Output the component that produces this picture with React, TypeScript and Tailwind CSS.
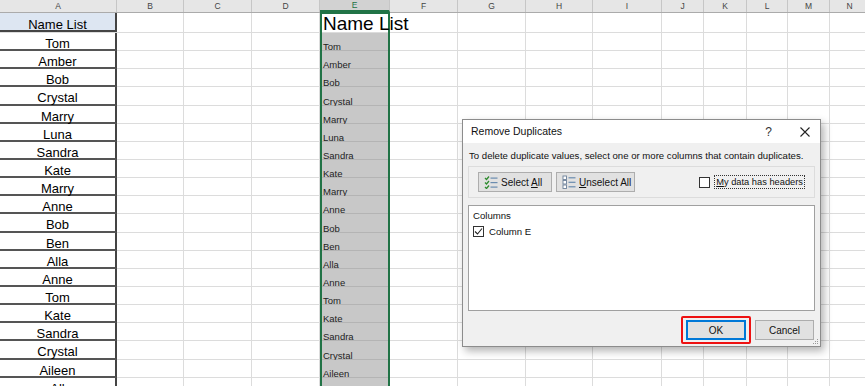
import React from "react";

const cols: { l: string; w: number }[] = [
  { l: "A", w: 117 },
  { l: "B", w: 67 },
  { l: "C", w: 68 },
  { l: "D", w: 68 },
  { l: "E", w: 70 },
  { l: "F", w: 68 },
  { l: "G", w: 68 },
  { l: "H", w: 67 },
  { l: "I", w: 69 },
  { l: "J", w: 42 },
  { l: "K", w: 43 },
  { l: "L", w: 41 },
  { l: "M", w: 42 },
  { l: "N", w: 40 },
];

const names = [
  "Tom", "Amber", "Bob", "Crystal", "Marry", "Luna", "Sandra", "Kate", "Marry", "Anne",
  "Bob", "Ben", "Alla", "Anne", "Tom", "Kate", "Sandra", "Crystal", "Aileen", "All",
];

function SelectAllIcon() {
  return (
    <svg width="14" height="14" viewBox="0 0 14 14">
      <path d="M1 3 L2.5 4.5 L5 1.5" stroke="#2e8b2e" strokeWidth="1.3" fill="none" />
      <path d="M1 7.5 L2.5 9 L5 6" stroke="#2e8b2e" strokeWidth="1.3" fill="none" />
      <path d="M1 12 L2.5 13.5 L5 10.5" stroke="#2e8b2e" strokeWidth="1.3" fill="none" />
      <rect x="6.5" y="2.5" width="7" height="1.2" fill="#6a8caf" />
      <rect x="6.5" y="7" width="7" height="1.2" fill="#6a8caf" />
      <rect x="6.5" y="11.5" width="7" height="1.2" fill="#6a8caf" />
    </svg>
  );
}

function UnselectAllIcon() {
  return (
    <svg width="14" height="14" viewBox="0 0 14 14">
      <rect x="1" y="1" width="3.5" height="3.5" stroke="#6a7f99" fill="#fff" strokeWidth="0.9" />
      <rect x="1" y="5.5" width="3.5" height="3.5" stroke="#6a7f99" fill="#fff" strokeWidth="0.9" />
      <rect x="1" y="10" width="3.5" height="3.5" stroke="#6a7f99" fill="#fff" strokeWidth="0.9" />
      <rect x="6.5" y="2.2" width="7" height="1.2" fill="#6a8caf" />
      <rect x="6.5" y="6.7" width="7" height="1.2" fill="#6a8caf" />
      <rect x="6.5" y="11.2" width="7" height="1.2" fill="#6a8caf" />
    </svg>
  );
}

export default function App() {
  return (
    <div
      className="relative w-[865px] h-[386px] overflow-hidden bg-white"
      style={{ fontFamily: '"Liberation Sans", Arial, sans-serif' }}
    >
      {/* column header row */}
      <div className="flex h-[13px] bg-[#e6e6e6] border-b border-[#ababab]">
        {cols.map((c) => (
          <div
            key={c.l}
            className={
              c.l === "E"
                ? "shrink-0 flex items-center justify-center text-[8.5px] text-[#217346] bg-[#d2d2d2] border-r border-[#c6c6c6] border-b-2 border-b-[#217346]"
                : "shrink-0 flex items-center justify-center text-[8.5px] text-[#444] border-r border-[#c6c6c6]"
            }
            style={{ width: c.w }}
          >
            {c.l}
          </div>
        ))}
      </div>

      {/* row 1 */}
      <div className="flex h-[20px] border-b border-[#dcdcdc]">
        <div
          className="shrink-0 flex items-center justify-center pt-[6px] text-[13px] leading-[10px] text-black bg-[#dde6f2] border-r-2 border-r-[#444] border-b-2 border-b-[#444]"
          style={{ width: cols[0].w }}
        >
          Name List
        </div>
        {cols.slice(1).map((c) => (
          <div
            key={c.l}
            className="shrink-0 relative border-r border-[#dcdcdc]"
            style={{ width: c.w }}
          >
            {c.l === "E" && (
              <span className="absolute left-[3px] top-[-1px] text-[19px] leading-[24px] whitespace-nowrap text-black z-10">
                Name List
              </span>
            )}
          </div>
        ))}
      </div>

      {/* data rows */}
      {names.map((n, i) => (
        <div key={i} className="flex h-[18.15px]">
          <div
            className="shrink-0 flex items-center justify-center pt-[6px] text-[13px] leading-[10px] text-black border-r-2 border-r-[#444] border-b-2 border-b-[#555] bg-white"
            style={{ width: cols[0].w }}
          >
            {n}
          </div>
          {cols.slice(1).map((c) =>
            c.l === "E" ? (
              <div
                key={c.l}
                className="shrink-0 flex items-end pl-[3px] pb-[1px] text-[9.5px] leading-[4px] text-[#222] bg-[#c8c8c8] border-b border-[#b4b4b4]"
                style={{ width: c.w }}
              >
                {n}
              </div>
            ) : (
              <div
                key={c.l}
                className="shrink-0 border-r border-[#dcdcdc] border-b border-b-[#dcdcdc]"
                style={{ width: c.w }}
              />
            )
          )}
        </div>
      ))}

      {/* selection border on column E */}
      <div className="absolute left-[320px] top-[12px] w-[70px] h-[380px] border-2 border-[#217346] pointer-events-none" />

      {/* dialog */}
      <div
        className="absolute left-[462px] top-[119px] w-[359px] h-[228px] bg-[#f0f0f0] border border-[#8c8c8c] shadow-[3px_4px_8px_rgba(0,0,0,0.3)] flex flex-col"
        style={{ fontFamily: '"Liberation Sans", Arial, sans-serif' }}
      >
        <div className="h-[23px] bg-white flex items-center pl-[8px] pr-[10px] text-[10.5px] text-[#111]">
          <span>Remove Duplicates</span>
          <span className="ml-auto mr-[28px] text-[12px] text-[#333]">?</span>
          <svg width="10" height="10" viewBox="0 0 10 10">
            <path d="M0.5 0.5 L9.5 9.5 M9.5 0.5 L0.5 9.5" stroke="#222" strokeWidth="1.1" />
          </svg>
        </div>
        <div className="px-[6px] pt-[6px] text-[9.6px] text-[#111] whitespace-nowrap">
          To delete duplicate values, select one or more columns that contain duplicates.
        </div>
        <div className="mx-[5px] mt-[3px] h-[32px] border border-[#dcdcdc] flex items-center pl-[9px] pr-[9px]">
          <div className="h-[20px] w-[74px] border border-[#adadad] bg-[#e1e1e1] flex items-center gap-[3px] pl-[5px] text-[10px] text-[#111]">
            <SelectAllIcon />
            <span>
              Select <span className="underline">A</span>ll
            </span>
          </div>
          <div className="ml-[4px] h-[20px] w-[79px] border border-[#adadad] bg-[#e1e1e1] flex items-center gap-[3px] pl-[5px] text-[10px] text-[#111]">
            <UnselectAllIcon />
            <span>
              <span className="underline">U</span>nselect All
            </span>
          </div>
          <div className="ml-auto flex items-center gap-[4px]">
            <div className="w-[11px] h-[11px] border border-[#333] bg-white" />
            <span className="text-[9.3px] text-[#111] border border-dotted border-[#333] px-[1px] leading-[12px]">
              <span className="underline">M</span>y data has headers
            </span>
          </div>
        </div>
        <div className="mx-[5px] mt-[7px] h-[106px] bg-white border border-[#a0a0a0] px-[4px] pt-[3px]">
          <div className="text-[9.6px] text-[#111]">Columns</div>
          <div className="flex items-center gap-[5px] mt-[1px] text-[9.6px] text-[#111]">
            <div className="w-[11px] h-[11px] border border-[#333] bg-white flex items-center justify-center">
              <svg width="9" height="9" viewBox="0 0 9 9">
                <path d="M1 4.5 L3.5 7 L8 1.5" stroke="#222" strokeWidth="1.1" fill="none" />
              </svg>
            </div>
            <span>Column E</span>
          </div>
        </div>
        <div className="flex justify-end items-center mt-[9px] pr-[6px] gap-[9px]">
          <div className="relative">
            <div className="absolute -left-[5px] -top-[4px] w-[70px] h-[28px] border-2 border-[#ee1111] rounded-[2px]" />
            <div className="w-[60px] h-[20px] border-2 border-[#0078d7] bg-[#e1e1e1] flex items-center justify-center text-[10px] text-[#111]">
              OK
            </div>
          </div>
          <div className="w-[59px] h-[20px] border border-[#adadad] bg-[#e1e1e1] flex items-center justify-center text-[10px] text-[#111]">
            Cancel
          </div>
        </div>
        <svg className="absolute right-[1px] bottom-[1px]" width="7" height="7" viewBox="0 0 7 7">
          <rect x="5" y="1" width="1" height="1" fill="#999" />
          <rect x="3" y="3" width="1" height="1" fill="#999" />
          <rect x="5" y="3" width="1" height="1" fill="#999" />
          <rect x="1" y="5" width="1" height="1" fill="#999" />
          <rect x="3" y="5" width="1" height="1" fill="#999" />
          <rect x="5" y="5" width="1" height="1" fill="#999" />
        </svg>
      </div>
    </div>
  );
}
